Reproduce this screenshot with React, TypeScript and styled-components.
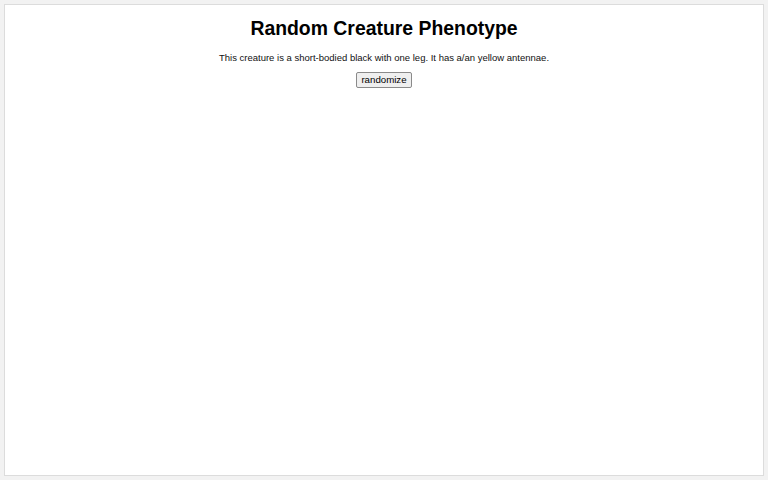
import styled, { createGlobalStyle } from "styled-components"

const GlobalStyle = createGlobalStyle`
    html, body {
        margin: 0;
        padding: 0;
        background-color: #f2f2f2;
        font-family: "Liberation Sans", Arial, sans-serif;
    }
`

const Page = styled.div`
    box-sizing: border-box;
    width: 768px;
    height: 480px;
    padding: 4px;
`

const Card = styled.div`
    box-sizing: border-box;
    height: 100%;
    background-color: #ffffff;
    border: 1px solid #dcdcdc;
    display: flex;
    flex-direction: column;
    align-items: center;
    padding-top: 12px;
`

const Title = styled.h1`
    margin: 0;
    font-size: 19.4px;
    line-height: 23px;
    font-weight: 700;
    color: #000;
`

const Description = styled.p`
    margin: 12px 0 0;
    font-size: 9.5px;
    line-height: 11px;
    color: #111;
`

const Button = styled.button`
    margin-top: 9px;
    font-family: "Liberation Sans", Arial, sans-serif;
    font-size: 9.7px;
    line-height: 12px;
    padding: 1px 4px;
    color: #000;
    background-color: #efefef;
    border: 1px solid #8a8a8a;
    border-radius: 2px;
`

export default function App() {
    return (
        <Page>
            <GlobalStyle />
            <Card>
                <Title>Random Creature Phenotype</Title>
                <Description>
                    This creature is a short-bodied black with one leg. It has a/an yellow antennae.
                </Description>
                <Button>randomize</Button>
            </Card>
        </Page>
    )
}
